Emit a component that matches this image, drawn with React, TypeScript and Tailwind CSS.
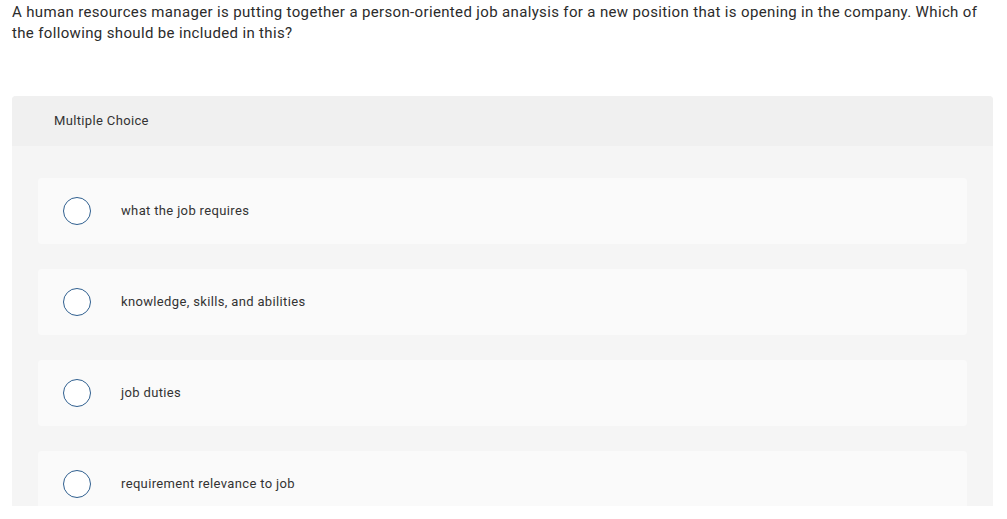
const OPTIONS = [
  "what the job requires",
  "knowledge, skills, and abilities",
  "job duties",
  "requirement relevance to job",
];

export default function App() {
  return (
    <div className="h-[506px] overflow-hidden bg-white font-['Roboto','Open_Sans',sans-serif] tracking-[0.35px] text-[#333333]">
      <p className="px-3 pt-[2px] text-[15px] leading-[21px] text-[#2b2b2b]">
        A human resources manager is putting together a person-oriented job analysis for a new
        position that is opening in the company. Which of the following should be included in
        this?
      </p>
      <div className="mx-3 mt-[52px] w-[981px] rounded-t-[4px] bg-[#f5f5f5]">
        <div className="flex h-[50px] items-center rounded-t-[4px] bg-[#f0f0f0] px-[42px] text-[13px]">
          Multiple Choice
        </div>
        <div className="flex flex-col gap-[25px] px-[26px] pt-[32px] pb-[25px]">
          {OPTIONS.map((o) => (
            <label
              key={o}
              className="flex h-[66px] items-center rounded-[4px] bg-[#fafafa] pl-[25px] text-[13px]"
            >
              <span className="h-[28px] w-[28px] shrink-0 rounded-full border-[1.5px] border-[#2f5f8f] bg-white" />
              <span className="ml-[30px]">{o}</span>
            </label>
          ))}
        </div>
      </div>
    </div>
  );
}
